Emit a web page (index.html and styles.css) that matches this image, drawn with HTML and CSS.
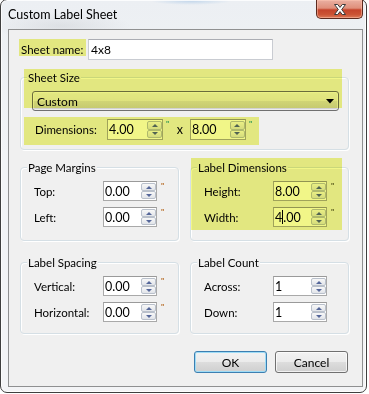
FILE: index.html
```html
<!DOCTYPE html>
<html>
<head>
<meta charset="utf-8">
<link rel="stylesheet" href="styles.css">
</head>
<body>
<div class="window">
  <div class="titlebar">
    <span class="title">Custom Label Sheet</span>
    <div class="close">
      <svg width="14" height="11" viewBox="0 0 14 11"><path d="M1.5 0.5h3.2L7 3.4 9.3 0.5h3.2L8.7 5.5l3.8 5h-3.2L7 7.6 4.7 10.5H1.5l3.8-5z" fill="#fff" stroke="#3a3a3a" stroke-width="1" stroke-linejoin="round"/></svg>
    </div>
  </div>
  <div class="panel">
    <div class="name-row">
      <span class="name-label">Sheet name:</span>
      <div class="textbox">4x8</div>
    </div>

    <div class="group sheet-size">
      <span class="group-title">Sheet Size</span>
      <div class="combo">
        <span>Custom</span>
        <svg class="combo-arrow" width="8" height="5" viewBox="0 0 8 5"><path d="M0 0h8L4 4.5z" fill="#000"/></svg>
      </div>
      <div class="dim-row">
        <span class="dim-label">Dimensions:</span>
        <div class="spin wide"><span class="val">4.00</span><span class="btns"><span class="btn up"></span><span class="btn down"></span></span></div>
        <span class="inch teal">"</span>
        <span class="times">x</span>
        <div class="spin wide second"><span class="val">8.00</span><span class="btns"><span class="btn up"></span><span class="btn down"></span></span></div>
        <span class="inch teal">"</span>
      </div>
    </div>

    <div class="grid">
      <div class="group">
        <span class="group-title">Page Margins</span>
        <div class="field">
          <span class="field-label">Top:</span>
          <div class="spin"><span class="val">0.00</span><span class="btns"><span class="btn up"></span><span class="btn down"></span></span></div>
          <span class="inch">"</span>
        </div>
        <div class="field">
          <span class="field-label">Left:</span>
          <div class="spin"><span class="val">0.00</span><span class="btns"><span class="btn up"></span><span class="btn down"></span></span></div>
          <span class="inch">"</span>
        </div>
      </div>

      <div class="group">
        <span class="group-title">Label Dimensions</span>
        <div class="field">
          <span class="field-label">Height:</span>
          <div class="spin"><span class="val">8.00</span><span class="btns"><span class="btn up"></span><span class="btn down"></span></span></div>
          <span class="inch dark">"</span>
        </div>
        <div class="field">
          <span class="field-label">Width:</span>
          <div class="spin"><span class="val">4<span class="caret"></span>.00</span><span class="btns"><span class="btn up"></span><span class="btn down"></span></span></div>
          <span class="inch dark">"</span>
        </div>
      </div>

      <div class="group">
        <span class="group-title">Label Spacing</span>
        <div class="field">
          <span class="field-label">Vertical:</span>
          <div class="spin"><span class="val">0.00</span><span class="btns"><span class="btn up"></span><span class="btn down"></span></span></div>
          <span class="inch">"</span>
        </div>
        <div class="field">
          <span class="field-label">Horizontal:</span>
          <div class="spin"><span class="val">0.00</span><span class="btns"><span class="btn up"></span><span class="btn down"></span></span></div>
          <span class="inch">"</span>
        </div>
      </div>

      <div class="group">
        <span class="group-title">Label Count</span>
        <div class="field">
          <span class="field-label">Across:</span>
          <div class="spin"><span class="val">1</span><span class="btns"><span class="btn up"></span><span class="btn down"></span></span></div>
        </div>
        <div class="field">
          <span class="field-label">Down:</span>
          <div class="spin"><span class="val">1</span><span class="btns"><span class="btn up"></span><span class="btn down"></span></span></div>
        </div>
      </div>
    </div>

    <div class="buttons">
      <div class="button default">OK</div>
      <div class="button">Cancel</div>
    </div>
  </div>

  <div class="hl hl-name"></div>
  <div class="hl hl-size"></div>
  <div class="hl hl-dims"></div>
  <div class="hl hl-label"></div>
</div>
</body>
</html>
```

FILE: styles.css
```css
body {
  margin: 0;
  background: #fff;
  font-family: Lato, "Noto Sans", sans-serif;
  font-size: 11.5px;
  color: #000;
}

.window {
  position: relative;
  box-sizing: border-box;
  width: 367px;
  height: 394px;
  margin-top: -1px;
  border: 1px solid #3f3f3f;
  border-radius: 7px;
  background:
    radial-gradient(ellipse 70px 14px at 60px 26px, rgba(150, 155, 160, 0.18), transparent),
    radial-gradient(ellipse 40px 4px at 190px 1px, rgba(120, 170, 220, 0.35), transparent),
    linear-gradient(180deg, #eceff3 0%, #f2f4f6 40%, #f3f4f6 100%);
  box-shadow: inset 0 0 0 1px rgba(255, 255, 255, 0.8);
  display: flex;
  flex-direction: column;
}

.titlebar {
  height: 29px;
  flex: none;
  display: flex;
  justify-content: space-between;
  align-items: flex-start;
}

.title {
  margin-left: 7px;
  padding-top: 7px;
  line-height: 16px;
  font-size: 12.5px;
}

.close {
  box-sizing: border-box;
  width: 47px;
  height: 19px;
  margin-right: 3px;
  border: 1px solid #5c2a1e;
  border-top: none;
  border-radius: 0 0 5px 5px;
  background: linear-gradient(180deg, #eab0a2 0%, #df8f7b 45%, #c5442b 55%, #cb5334 80%, #dc7a58 100%);
  box-shadow: inset 0 0 0 1px rgba(255, 200, 180, 0.5);
  display: flex;
  align-items: center;
  justify-content: center;
}

.panel {
  box-sizing: border-box;
  width: 355px;
  height: 358px;
  margin-left: 7px;
  border: 1px solid #8f9091;
  background: #f0f0f0;
  display: flex;
  flex-direction: column;
  flex: none;
}

.name-row {
  display: flex;
  align-items: center;
  margin: 9px 0 0 12px;
}

.name-label {
  width: 67px;
}

.textbox {
  box-sizing: border-box;
  width: 185px;
  height: 21px;
  border: 1px solid #c9ccd2;
  border-top-color: #abadb3;
  background: #fff;
  padding-left: 2px;
  line-height: 19px;
  font-size: 12px;
}

.group {
  box-sizing: border-box;
  border: 1px solid #d5dfe5;
  border-radius: 4px;
  box-shadow: inset 1px 1px 0 #fff, 1px 1px 0 #fff;
  display: flex;
  flex-direction: column;
}

.group-title {
  align-self: flex-start;
  margin: -8px 0 0 6px;
  padding: 0 1px;
  background: #f0f0f0;
  line-height: 15px;
}

.sheet-size {
  height: 73px;
  margin: 17px 13px 0 11px;
}

.combo {
  box-sizing: border-box;
  height: 20px;
  margin: 6px 9px 0 11px;
  border: 1px solid #707070;
  border-radius: 3px;
  background: linear-gradient(180deg, #f2f2f2 0%, #ebebeb 50%, #dddddd 50%, #cfcfcf 100%);
  box-shadow: inset 0 0 0 1px rgba(255, 255, 255, 0.6);
  display: flex;
  align-items: center;
  justify-content: space-between;
  padding: 0 4px 0 4px;
  font-size: 12px;
}

.combo-arrow {
  display: block;
}

.dim-row {
  display: flex;
  align-items: center;
  margin: 8px 0 0 14px;
}

.dim-label {
  width: 72px;
}

.spin {
  box-sizing: border-box;
  width: 54px;
  height: 20px;
  border: 1px solid #a9a9a9;
  border-top-color: #9a9a9a;
  background: #fff;
  display: flex;
  align-items: stretch;
}

.spin.wide {
  width: 56px;
  height: 21px;
}

.spin.second {
  margin-left: 7px;
}

.val {
  flex: 1;
  padding-left: 1px;
  font-size: 12.5px;
  display: flex;
  align-items: center;
}

.caret {
  display: inline-block;
  width: 1px;
  height: 14px;
  background: #000;
}

.btns {
  width: 15px;
  display: flex;
  flex-direction: column;
  padding: 1px 0 1px 0;
  box-sizing: border-box;
}

.btn {
  flex: 1;
  box-sizing: border-box;
  border: 1px solid #b9c0cb;
  border-radius: 2px;
  background: linear-gradient(180deg, #f8f8f8, #e1e4e9);
  display: flex;
  align-items: center;
  justify-content: center;
}

.btn.up::after {
  content: "";
  border-left: 3px solid transparent;
  border-right: 3px solid transparent;
  border-bottom: 3px solid #55679a;
}

.btn.down::after {
  content: "";
  border-left: 3px solid transparent;
  border-right: 3px solid transparent;
  border-top: 3px solid #55679a;
}

.inch {
  align-self: flex-start;
  margin: 1px 0 0 4px;
  font-size: 8px;
  font-weight: bold;
  line-height: 8px;
  color: #b4661e;
  letter-spacing: -1.5px;
}

.inch.teal {
  margin-left: 3px;
  color: #2f9c9c;
}

.inch.dark {
  color: #55552a;
}

.times {
  margin-left: 9px;
  font-size: 12.5px;
}

.grid {
  display: grid;
  grid-template-columns: 159px 159px;
  grid-template-rows: 74px 72px;
  column-gap: 11px;
  row-gap: 21px;
  margin: 17px 0 0 11px;
}

.field {
  display: flex;
  align-items: center;
  margin: 6px 0 0 13px;
}

.field-label {
  width: 69px;
}

.buttons {
  display: flex;
  justify-content: flex-end;
  gap: 8px;
  margin: 17px 14px 0 0;
}

.button {
  box-sizing: border-box;
  width: 73px;
  height: 22px;
  border: 1px solid #707070;
  border-radius: 3px;
  background: linear-gradient(180deg, #f2f2f2 0%, #ebebeb 50%, #dddddd 50%, #cfcfcf 100%);
  box-shadow: inset 0 0 0 1px rgba(255, 255, 255, 0.7);
  display: flex;
  align-items: center;
  justify-content: center;
  font-size: 12px;
}

.button.default {
  border-color: #3c7fb1;
  box-shadow: inset 0 0 0 1px #9fdcf6;
}

.hl {
  position: absolute;
  background: #f1f688;
  mix-blend-mode: multiply;
  pointer-events: none;
}

.hl-name {
  left: 18px;
  top: 39px;
  width: 67px;
  height: 17px;
}

.hl-size {
  left: 23px;
  top: 69px;
  width: 318px;
  height: 39px;
}

.hl-dims {
  left: 23px;
  top: 117px;
  width: 235px;
  height: 28px;
}

.hl-label {
  left: 190px;
  top: 158px;
  width: 151px;
  height: 72px;
}
```
